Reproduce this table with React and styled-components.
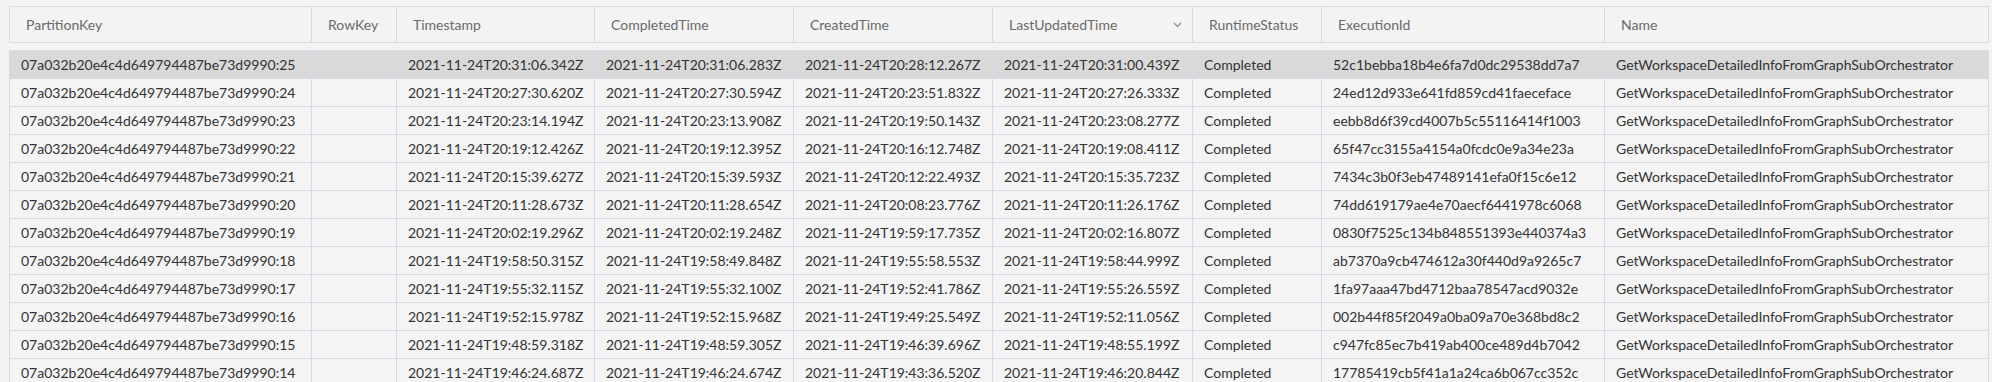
import React from "react"
import styled, { createGlobalStyle } from "styled-components"

const GlobalStyle = createGlobalStyle`
  html, body {
    margin: 0;
    padding: 0;
    background: #f3f3f3;
    overflow: hidden;
  }
`

const columns = [
  { key: "pk", title: "PartitionKey", width: 302 },
  { key: "rk", title: "RowKey", width: 85 },
  { key: "ts", title: "Timestamp", width: 198 },
  { key: "completed", title: "CompletedTime", width: 199 },
  { key: "created", title: "CreatedTime", width: 199 },
  { key: "updated", title: "LastUpdatedTime", width: 200, sorted: true },
  { key: "status", title: "RuntimeStatus", width: 129 },
  { key: "exec", title: "ExecutionId", width: 283 },
  { key: "name", title: "Name", width: 384 },
]

const gridTemplate = columns.map(c => `${c.width}px`).join(" ")

const raw = [
  ["25", "20:31:06.342", "20:31:06.283", "20:28:12.267", "20:31:00.439", "52c1bebba18b4e6fa7d0dc29538dd7a7"],
  ["24", "20:27:30.620", "20:27:30.594", "20:23:51.832", "20:27:26.333", "24ed12d933e641fd859cd41faeceface"],
  ["23", "20:23:14.194", "20:23:13.908", "20:19:50.143", "20:23:08.277", "eebb8d6f39cd4007b5c55116414f1003"],
  ["22", "20:19:12.426", "20:19:12.395", "20:16:12.748", "20:19:08.411", "65f47cc3155a4154a0fcdc0e9a34e23a"],
  ["21", "20:15:39.627", "20:15:39.593", "20:12:22.493", "20:15:35.723", "7434c3b0f3eb47489141efa0f15c6e12"],
  ["20", "20:11:28.673", "20:11:28.654", "20:08:23.776", "20:11:26.176", "74dd619179ae4e70aecf6441978c6068"],
  ["19", "20:02:19.296", "20:02:19.248", "19:59:17.735", "20:02:16.807", "0830f7525c134b848551393e440374a3"],
  ["18", "19:58:50.315", "19:58:49.848", "19:55:58.553", "19:58:44.999", "ab7370a9cb474612a30f440d9a9265c7"],
  ["17", "19:55:32.115", "19:55:32.100", "19:52:41.786", "19:55:26.559", "1fa97aaa47bd4712baa78547acd9032e"],
  ["16", "19:52:15.978", "19:52:15.968", "19:49:25.549", "19:52:11.056", "002b44f85f2049a0ba09a70e368bd8c2"],
  ["15", "19:48:59.318", "19:48:59.305", "19:46:39.696", "19:48:55.199", "c947fc85ec7b419ab400ce489d4b7042"],
  ["14", "19:46:24.687", "19:46:24.674", "19:43:36.520", "19:46:20.844", "17785419cb5f41a1a24ca6b067cc352c"],
]

const day = t => `2021-11-24T${t}Z`

const rows = raw.map(([n, ts, completed, created, updated, exec]) => ({
  pk: `07a032b20e4c4d649794487be73d9990:${n}`,
  rk: "",
  ts: day(ts),
  completed: day(completed),
  created: day(created),
  updated: day(updated),
  status: "Completed",
  exec,
  name: "GetWorkspaceDetailedInfoFromGraphSubOrchestrator",
}))

const Page = styled.div`
  padding: 6px 0 0 9px;
  font-family: Lato, "Open Sans", sans-serif;
  font-size: 14px;
`

const HeaderRow = styled.div`
  display: grid;
  grid-template-columns: ${gridTemplate};
  height: 37px;
  box-sizing: border-box;
  border-top: 1px solid #d8d8e6;
  border-bottom: 1px solid #d8d8e6;
  border-left: 1px solid #d8d8e6;
  width: max-content;
`

const HeaderCell = styled.div`
  display: flex;
  align-items: center;
  justify-content: space-between;
  padding: 0 10px 0 16px;
  border-right: 1px solid #d8d8e6;
  color: #6a6a6a;
  white-space: nowrap;
  overflow: hidden;
`

const Chevron = styled.svg`
  width: 9px;
  height: 6px;
  flex-shrink: 0;
`

const Body = styled.div`
  margin-top: 7px;
  border-top: 1px solid #d8d8e6;
  border-left: 1px solid #d8d8e6;
  width: max-content;
`

const Row = styled.div`
  display: grid;
  grid-template-columns: ${gridTemplate};
  height: 28px;
  box-sizing: border-box;
  border-bottom: 1px solid #d8d8e6;
  background: ${props => (props.selected ? "#d9d9d9" : "#f4f4f4")};
`

const Cell = styled.div`
  display: flex;
  align-items: center;
  padding: 0 11px;
  border-right: 1px solid #d8d8e6;
  color: #333333;
  white-space: nowrap;
  overflow: hidden;
`

export default function App() {
  return (
    <>
      <GlobalStyle />
      <Page>
        <HeaderRow>
          {columns.map(c => (
            <HeaderCell key={c.key}>
              <span>{c.title}</span>
              {c.sorted && (
                <Chevron viewBox="0 0 9 6">
                  <polyline points="1,1 4.5,4.5 8,1" fill="none" stroke="#8a8a8a" strokeWidth="1.2" />
                </Chevron>
              )}
            </HeaderCell>
          ))}
        </HeaderRow>
        <Body>
          {rows.map((r, i) => (
            <Row key={r.pk} selected={i === 0}>
              {columns.map(c => (
                <Cell key={c.key}>{r[c.key]}</Cell>
              ))}
            </Row>
          ))}
        </Body>
      </Page>
    </>
  )
}
